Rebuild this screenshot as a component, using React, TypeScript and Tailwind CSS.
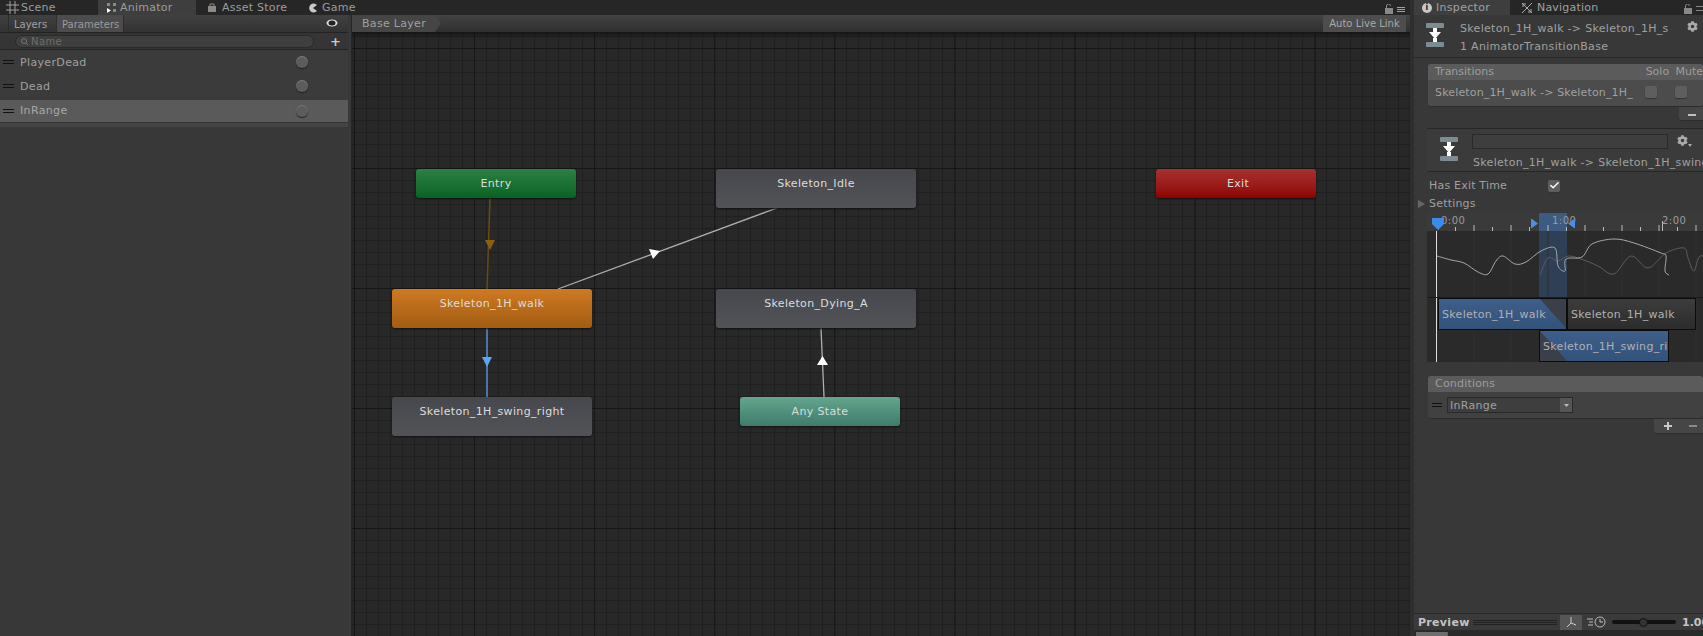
import { Check } from 'lucide-react';
import { FaCog } from 'react-icons/fa';

const FONT = "font-['DejaVu_Sans',sans-serif]";

// points read off the timeline, in page pixels relative to the timeline box
function smooth(points: number[][]) {
  let d = `M${points[0][0]} ${points[0][1]}`;
  for (let i = 0; i < points.length - 1; i++) {
    const p0 = points[Math.max(i - 1, 0)];
    const p1 = points[i];
    const p2 = points[i + 1];
    const p3 = points[Math.min(i + 2, points.length - 1)];
    d += ` C${p1[0] + (p2[0] - p0[0]) / 6} ${p1[1] + (p2[1] - p0[1]) / 6} ${p2[0] - (p3[0] - p1[0]) / 6} ${p2[1] - (p3[1] - p1[1]) / 6} ${p2[0]} ${p2[1]}`;
  }
  return d;
}

const MAIN_CURVE = [
  [9, 5], [23, 9], [36, 12], [50, 21], [60, 23], [68, 10], [75, 5], [87, 13], [98, 11], [113, 0], [127, -3], [130, 15], [137, 20], [138, 8], [154, 6], [164, -7], [186, -12], [206, -8], [233, 2], [238, 5], [237, 20], [241, 24],
].map(([x, y]) => [x + 1, y + 38]);

const DIM_CURVE = [
  [112, 24], [120, 7], [130, 10], [140, 5], [153, 8], [170, 15], [186, 23], [203, 5], [220, 17], [238, 2], [256, -3], [260, 7], [266, 20], [272, 5], [285, 10], [292, 6], [298, 12],
].map(([x, y]) => [x + 1, y + 38]);

function TransitionIcon() {
  return (
    <svg width="18" height="24" viewBox="0 0 18 24">
      <rect x="0" y="0" width="18" height="5" rx="1" fill="#7d8c92" />
      <rect x="0" y="19" width="18" height="5" rx="1" fill="#7d8c92" />
      <rect x="7" y="5" width="4" height="5" fill="#fff" />
      <path d="M3 9h12l-6 7z" fill="#fff" />
      <rect x="7" y="15" width="4" height="4" fill="#fff" />
    </svg>
  );
}

function Tab({ icon, label, active, w }: { icon: React.ReactNode; label: string; active?: boolean; w: string }) {
  return (
    <div className={`flex items-center h-[15px] ${w} ${active ? 'bg-[#3e3e3e]' : ''}`}>
      {icon}
      <span className="text-[#9c9c9c] tracking-[0.25px]">{label}</span>
    </div>
  );
}

function GraphNode({ label, pos, color }: { label: string; pos: string; color: string }) {
  return (
    <div className={`absolute rounded-[3px] flex justify-center pt-[7px] text-[#dcdcdc] tracking-[0.35px] shadow-[0_1px_2px_#111] ${pos} ${color}`}>
      {label}
    </div>
  );
}

function ParamRow({ label, active }: { label: string; active?: boolean }) {
  return (
    <div className={`flex items-center pl-[3px] ${active ? 'h-[22px] mt-[2px] pb-[1px] bg-[#5a5a5a] text-[#a8a8a8]' : 'h-[24px] text-[#a0a0a0]'}`}>
      <span className="flex flex-col gap-[2px] w-[11px]">
        <span className="h-px bg-[#111]" />
        <span className="h-px bg-[#111]" />
      </span>
      <span className="ml-[6px] w-[276px] tracking-[0.35px]">{label}</span>
      <span className="w-3 h-3 rounded-full bg-[#5c5c5c] shadow-[inset_0_1px_1px_#777,0_1px_1px_#222]" />
    </div>
  );
}

function Clip({ label, pos, dark, wedge }: { label: string; pos: string; dark?: boolean; wedge?: string }) {
  return (
    <div
      className={`absolute h-[32px] border border-[#0c0c0c] flex items-center overflow-hidden whitespace-nowrap text-[#b0b0b0] tracking-[0.3px] pl-[3px] ${pos} ${
        dark ? 'bg-gradient-to-b from-[#3d3d3d] to-[#2c2c2c]' : 'bg-gradient-to-b from-[#3e5f8b] to-[#34527a]'
      }`}
    >
      {wedge && (
        <svg className="absolute inset-0" width="130" height="30">
          <path d={wedge} fill="#3a3f49" />
        </svg>
      )}
      <span className="relative">{label}</span>
    </div>
  );
}

function Timeline() {
  const ticks = [];
  for (let x = 28.5, i = 0; x < 276; x += 18.5, i++) ticks.push({ x, major: i % 2 === 1 });
  return (
    <div className="relative mt-[2px] ml-[13px] h-[149px] bg-[#2a2a2a] overflow-hidden">
      {/* ruler */}
      <div className="h-[18px] bg-[#3a3a3a]" />
      {/* band behind the transition */}
      <div className="absolute left-[112px] top-0 w-[28px] h-[18px] bg-[#3d5a80]" />
      <div className="absolute left-[112px] top-[18px] w-[28px] h-[68px] bg-[#2f3f55]" />
      <svg className="absolute inset-0" width="276" height="149">
        {ticks.map((t, i) => (
          <line key={i} x1={t.x} x2={t.x} y1="18" y2="149" stroke={t.major ? '#313131' : 'transparent'} />
        ))}
        {ticks.map((t, i) => (
          <line key={`r${i}`} x1={t.x} x2={t.x} y1={t.major ? 12 : 14} y2="18" stroke="#bbb" />
        ))}
        <line x1="235.500" x2="235.500" y1="8" y2="18" stroke="#bbb" />
        <line x1="9.500" x2="9.500" y1="18" y2="149" stroke="#ddd" />
        <path d={smooth(DIM_CURVE)} fill="none" stroke="#5c5c5c" strokeWidth="1" />
        <path d={smooth(MAIN_CURVE)} fill="none" stroke="#a8a8a8" strokeWidth="1" />
      </svg>
      <span className="absolute left-[14px] top-[0px] text-[#9c9c9c] text-[10px] tracking-[0.5px]">0:00</span>
      <span className="absolute left-[125px] top-[0px] text-[#9c9c9c] text-[10px] tracking-[0.5px]">1:00</span>
      <span className="absolute left-[235px] top-[0px] text-[#9c9c9c] text-[10px] tracking-[0.5px]">2:00</span>
      <svg className="absolute inset-0" width="276" height="30">
        <path d="M5 5h12v6l-6 6-6-6z" fill="#3e8ae8" />
        <path d="M104 6h1v9h-1zM105 6l6 4.500-6 4.500z" fill="#4d8fdf" />
        <path d="M147 6h1v9h-1zM147 6l-6 4.500 6 4.500z" fill="#4d8fdf" />
      </svg>
      <div className="absolute left-0 right-0 top-[84px] h-px bg-[#1b1b1b]" />
      <Clip label="Skeleton_1H_walk" pos="left-[11px] top-[85px] w-[129px]" wedge="M101 0h27v30z" />
      <Clip label="Skeleton_1H_walk" pos="left-[140px] top-[85px] w-[129px]" dark />
      <Clip label="Skeleton_1H_swing_right" pos="left-[112px] top-[117px] w-[130px]" wedge="M0 0l27 30H0z" />
    </div>
  );
}

export default function App() {
  return (
    <div className={`${FONT} flex w-[1703px] h-[636px] overflow-hidden bg-[#2e2e2e] text-[11px] leading-[15px]`}>
      {/* Left dock: tabs, parameters and graph */}
      <div className="flex flex-col w-[1410px] shrink-0">
        <div className="flex h-[15px] bg-[#262626]">
          <Tab
            w="w-[98px] pl-[6px] gap-[2px]"
            label="Scene"
            icon={
              <svg width="13" height="13" viewBox="0 0 13 13" stroke="#a0a0a0">
                <path d="M4 0v13M9 0v13M0 4h13M0 9h13" />
              </svg>
            }
          />
          <Tab
            w="w-[98px] pl-[8px] gap-[3px]"
            active
            label="Animator"
            icon={
              <svg width="11" height="11" viewBox="0 0 11 11">
                <rect x="1" y="1" width="3" height="3" fill="#888" />
                <rect x="7" y="1" width="3" height="3" fill="#888" />
                <rect x="7" y="7" width="3" height="3" fill="#888" />
                <path d="M1 6v5l4-2.500z" fill="#fff" />
              </svg>
            }
          />
          <Tab
            w="w-[100px] pl-[12px] gap-[6px]"
            label="Asset Store"
            icon={
              <svg width="8" height="10" viewBox="0 0 8 10">
                <path d="M0 3h8v6H0z" fill="#8a8a8a" />
                <path d="M2 3V1h4v2" fill="none" stroke="#8a8a8a" />
              </svg>
            }
          />
          <Tab
            w="w-[90px] pl-[12px] gap-[4px]"
            label="Game"
            icon={
              <svg width="10" height="10" viewBox="0 0 10 10">
                <path d="M9 2a4.500 4.500 0 1 0 0 6L5 5z" fill="#c8c8c8" />
              </svg>
            }
          />
          <div className="ml-auto flex items-center gap-[4px] pr-[5px] pt-[3px]">
            <svg width="8" height="10" viewBox="0 0 8 10">
              <rect y="4" width="8" height="6" fill="#888" />
              <path d="M1.500 4V2a2 2 0 0 1 4 0" fill="none" stroke="#888" />
            </svg>
            <span className="flex flex-col gap-[1px] w-[8px]">
              <span className="h-px bg-[#a0a0a0]" />
              <span className="h-px bg-[#a0a0a0]" />
              <span className="h-px bg-[#a0a0a0]" />
            </span>
          </div>
        </div>

        <div className="flex flex-1 min-h-0">
          {/* Parameters panel */}
          <div className="w-[352px] bg-[#383838] pr-[3px] border-r border-[#262626] flex flex-col">
            <div className="flex h-[17px] bg-gradient-to-b from-[#414141] to-[#333333] text-[10px] leading-[19px]">
              <div className="w-[8px]" />
              <div className="w-[49px] pl-[5px] text-[#a0a0a0] border-x border-[#2d2d2d]">Layers</div>
              <div className="w-[67px] pl-[5px] text-[#9a9a9a] bg-[#4c4c4c] border-r border-[#2d2d2d]">Parameters</div>
              <svg width="12" height="8" viewBox="0 0 12 8" className="ml-[202px] mt-[4px]">
                <ellipse cx="6" cy="4" rx="5.500" ry="3.500" fill="#ddd" />
                <ellipse cx="6" cy="4" rx="3.500" ry="2.500" fill="#222" />
              </svg>
            </div>
            <div className="flex items-center h-[18px] border-y border-[#232323] bg-[#353535]">
              <div className="ml-[15px] w-[299px] h-[13px] rounded-full bg-[#3f3f3f] border border-[#2a2a2a] flex items-center pl-[4px] text-[10px] text-[#6d6d6d] tracking-[0.4px]">
                <svg width="11" height="9" viewBox="0 0 11 9" fill="none" stroke="#777">
                  <circle cx="4" cy="4" r="2.500" />
                  <path d="M6 6l2 2" />
                </svg>
                Name
              </div>
              <span className="ml-[16px] text-[13px] font-bold leading-[13px] text-[#c8c8c8]">+</span>
            </div>
            <div className="bg-[#3b3b3b]">
              <ParamRow label="PlayerDead" />
              <ParamRow label="Dead" />
              <ParamRow label="InRange" active />
            </div>
            <div className="h-[5px] bg-[#444444] border-t border-[#333]" />
          </div>

          {/* State machine graph */}
          <div className="flex-1 min-w-0 flex flex-col">
            <div className="flex h-[17px] bg-gradient-to-b from-[#434343] to-[#2f2f2f]">
              <div className="relative w-[83px] bg-[#454545] pl-[10px] text-[#a0a0a0] tracking-[0.3px] leading-[18px]">
                Base Layer
                <svg className="absolute -right-[6px] top-0" width="6" height="17">
                  <path d="M0 0l6 8.500L0 17z" fill="#454545" />
                </svg>
              </div>
              <div className="ml-auto mr-[4px] w-[83px] bg-[#4d4d4d] text-[10px] text-[#a8a8a8] text-center leading-[18px]">
                Auto Live Link
              </div>
            </div>
            <div className="relative flex-1 min-h-0 bg-[#282828] bg-[linear-gradient(#161616_1px,transparent_1px),linear-gradient(90deg,#161616_1px,transparent_1px),linear-gradient(#202020_1px,transparent_1px),linear-gradient(90deg,#202020_1px,transparent_1px)] bg-[size:120px_120px,120.100px_120px,12px_12px,12px_12px] bg-[position:0_16px,2px_0,0_4px,2px_0] shadow-[inset_0_5px_5px_-3px_#111]">
              <svg className="absolute inset-0" width="1058" height="587">
                <line x1="138" y1="166" x2="135" y2="257" stroke="#6b4a12" strokeWidth="1.500" />
                <path d="M133 208h10l-5 10z" fill="#8a5f10" />
                <line x1="135" y1="296" x2="135" y2="365" stroke="#5a8fd8" strokeWidth="1.500" />
                <path d="M130 325h10l-5 10z" fill="#5aa8f5" />
                <line x1="206" y1="257" x2="425" y2="176" stroke="#b0b0b0" strokeWidth="1.300" />
                <path d="M297 217l11 2-7 8z" fill="#fff" />
                <line x1="472" y1="365" x2="469" y2="296" stroke="#b0b0b0" strokeWidth="1.300" />
                <path d="M465 333h11l-5.500-9z" fill="#fff" />
              </svg>
              <GraphNode label="Entry" pos="left-[64px] top-[137px] w-[160px] h-[29px]" color="bg-gradient-to-b from-[#2b8044] to-[#066322]" />
              <GraphNode label="Skeleton_Idle" pos="left-[364px] top-[137px] w-[200px] h-[39px]" color="bg-gradient-to-b from-[#46484d] to-[#525357]" />
              <GraphNode label="Exit" pos="left-[804px] top-[137px] w-[160px] h-[29px] pl-[4px]" color="bg-gradient-to-b from-[#a63030] to-[#8f0000]" />
              <GraphNode label="Skeleton_1H_walk" pos="left-[40px] top-[257px] w-[200px] h-[39px]" color="bg-gradient-to-b from-[#cf7a22] to-[#a35c12]" />
              <GraphNode label="Skeleton_Dying_A" pos="left-[364px] top-[257px] w-[200px] h-[39px]" color="bg-gradient-to-b from-[#46484d] to-[#525357]" />
              <GraphNode label="Skeleton_1H_swing_right" pos="left-[40px] top-[365px] w-[200px] h-[39px]" color="bg-gradient-to-b from-[#46484d] to-[#525357]" />
              <GraphNode label="Any State" pos="left-[388px] top-[365px] w-[160px] h-[29px]" color="bg-gradient-to-b from-[#64a68e] to-[#3f7b6c]" />
            </div>
          </div>
        </div>
      </div>

      {/* Inspector dock */}
      <div className="w-[289px] ml-[4px] shrink-0 flex flex-col overflow-hidden bg-[#383838] text-[#a0a0a0]">
        <div className="flex h-[15px] bg-[#262626]">
          <div className="flex items-center gap-[4px] w-[96px] pl-[8px] bg-[#3e3e3e] tracking-[0.3px]">
            <span className="w-[10px] h-[10px] rounded-full bg-[#c8c8c8] text-[#222] text-[8px] leading-[10px] text-center font-bold">i</span>
            Inspector
          </div>
          <div className="flex items-center gap-[5px] pl-[12px] tracking-[0.2px] w-[160px]">
            <svg width="10" height="10" viewBox="0 0 10 10" stroke="#aaa" fill="none">
              <path d="M0 0l10 10M10 0L0 10M1 1h3M1 1v3M9 9H6M9 9V6" />
            </svg>
            Navigation
          </div>
          <div className="ml-auto flex items-center gap-1 pt-[2px]">
            <svg width="8" height="10" viewBox="0 0 8 10">
              <rect y="4" width="8" height="6" fill="#888" />
              <path d="M1.500 4V2a2 2 0 0 1 4 0" fill="none" stroke="#888" />
            </svg>
            <span className="w-[7px] h-[5px] border-y border-[#888]" />
          </div>
        </div>

        <div className="flex h-[43px] border-b border-[#2a2a2a] pl-[12px] pt-[8px]">
          <TransitionIcon />
          <div className="ml-[16px] -mt-[3px] leading-[18px] whitespace-nowrap w-[227px] overflow-hidden tracking-[0.3px]">
            <div>Skeleton_1H_walk -&gt; Skeleton_1H_s</div>
            <div>1 AnimatorTransitionBase</div>
          </div>
          <FaCog size={11} className="-mt-[2px] text-[#aaa] shrink-0" />
        </div>

        <div className="ml-[14px] mt-[6px] rounded-[3px] bg-[#4c4c4c] border-b border-[#2c2c2c] overflow-hidden h-[43px]">
          <div className="flex h-[16px] bg-[#5b5b5b] pl-[7px] leading-[16px] text-[#9d9d9d] whitespace-nowrap">
            <span className="w-[212px]">Transitions</span>
            <span className="w-[30px]">Solo</span>
            Mute
          </div>
          <div className="flex items-center h-[24px] pl-[7px] whitespace-nowrap">
            <span className="w-[210px] overflow-hidden text-[#a0a0a0] tracking-[0.15px]">Skeleton_1H_walk -&gt; Skeleton_1H_</span>
            <span className="w-[12px] h-[12px] rounded-[2px] bg-[#5e5e5e] shadow-[0_1px_1px_#333]" />
            <span className="w-[12px] h-[12px] rounded-[2px] bg-[#5e5e5e] ml-[18px] shadow-[0_1px_1px_#333]" />
          </div>
        </div>
        <div className="ml-auto h-[14px] w-[24px] bg-[#464646] rounded-bl-[3px] flex justify-center pt-[7px] border-b border-[#2c2c2c]">
          <span className="w-[8px] h-[2px] bg-[#c0c0c0] ml-[1px]" />
        </div>

        <div className="ml-[13px] mt-[7px] h-[44px] border-y border-[#262626] bg-[#3b3b3b] flex flex-col">
          <div className="flex pl-[13px] pt-[5px] h-[26px]">
            <div className="w-[18px] h-[24px] shrink-0 mt-[3px]"><TransitionIcon /></div>
            <div className="ml-[14px] w-[196px] h-[15px] bg-[#3e3e3e] border border-[#2a2a2a] shrink-0" />
            <FaCog size={11} className="ml-[9px] mt-[1px] text-[#aaa] shrink-0" />
            <svg width="4" height="3" viewBox="0 0 4 3" className="mt-[10px] shrink-0">
              <path d="M0 0h4L2 3z" fill="#aaa" />
            </svg>
          </div>
          <div className="pl-[46px] whitespace-nowrap tracking-[0.3px] overflow-hidden">Skeleton_1H_walk -&gt; Skeleton_1H_swing_right</div>
        </div>

        <div className="flex items-center h-[17px] mt-[5px] pl-[15px] tracking-[0.2px]">
          <span className="w-[119px]">Has Exit Time</span>
          <span className="w-[12px] h-[12px] rounded-[2px] bg-[#5e5e5e] flex items-center justify-center shadow-[0_1px_1px_#333]">
            <Check size={11} strokeWidth={3} className="text-white" />
          </span>
        </div>

        <div className="flex items-center h-[15px] mt-[2px] tracking-[0.2px]">
          <svg width="15" height="8" viewBox="0 0 15 8" className="shrink-0">
            <path d="M4 0l7 4-7 4z" fill="#666" />
          </svg>
          Settings
        </div>

        <Timeline />

        <div className="ml-[14px] mt-[14px] rounded-[3px] bg-[#414141] border-b border-[#2c2c2c] overflow-hidden h-[43px]">
          <div className="h-[16px] bg-[#5b5b5b] pl-[7px] leading-[16px] text-[#9d9d9d] tracking-[0.2px]">Conditions</div>
          <div className="flex items-center h-[26px] pl-[4px]">
            <span className="flex flex-col gap-[2px] w-[10px]">
              <span className="h-px bg-[#111]" />
              <span className="h-px bg-[#111]" />
            </span>
            <div className="ml-[5px] flex items-center justify-between w-[126px] h-[16px] bg-[#3e3e3e] border border-[#2a2a2a] pl-[2px] tracking-[0.3px]">
              InRange
              <span className="w-[12px] h-[14px] bg-[#555] flex items-center justify-center">
                <svg width="5" height="3" viewBox="0 0 5 3"><path d="M0 0h5L2.500 3z" fill="#bbb" /></svg>
              </span>
            </div>
          </div>
        </div>
        <div className="ml-auto flex items-center gap-[17px] h-[15px] w-[49px] pl-[10px] bg-[#464646] rounded-bl-[3px] border-b border-[#2c2c2c]">
          <span className="relative w-[8px] h-[8px]">
            <span className="absolute left-0 top-[3px] w-[8px] h-[2px] bg-[#c8c8c8]" />
            <span className="absolute left-[3px] top-0 w-[2px] h-[8px] bg-[#c8c8c8]" />
          </span>
          <span className="w-[8px] h-[2px] bg-[#8a8a8a]" />
        </div>

        <div className="mt-auto flex items-center h-[17px] bg-[#3a3a3a] border-t border-[#2a2a2a] pl-[4px] whitespace-nowrap">
          <span className="font-bold text-[#c4c4c4] tracking-[0.3px] w-[55px] shrink-0">Preview</span>
          <span className="w-[84px] h-[5px] border-y border-[#222] flex flex-col justify-center shrink-0">
            <span className="h-px bg-[#222]" />
          </span>
          <span className="ml-[3px] w-[22px] h-[15px] bg-[#555] flex items-center justify-center shrink-0">
            <svg width="12" height="12" viewBox="0 0 12 12" stroke="#ccc" fill="none">
              <path d="M6 1v6M6 7l-4 4M6 7l5 2" />
            </svg>
          </span>
          <svg width="20" height="12" viewBox="0 0 20 12" stroke="#bbb" fill="none" className="ml-[4px] shrink-0">
            <path d="M1 3h6M3 6h4M2 9h5" />
            <circle cx="14" cy="6" r="5" />
            <path d="M14 3v3h3" />
          </svg>
          <span className="relative ml-[6px] w-[64px] h-[4px] rounded-full bg-[#111] flex items-center shrink-0">
            <span className="absolute left-[27px] w-[9px] h-[9px] rounded-full bg-[#333] border border-[#111]" />
          </span>
          <span className="ml-[6px] font-bold text-[#c4c4c4]">1.00</span>
        </div>
        <div className="h-[6px] bg-[#2a2a2a] pl-[2px] pt-[2px]">
          <div className="w-[32px] h-[4px] bg-[#6e6e6e] border-r border-[#c33]" />
        </div>
      </div>
    </div>
  );
}
